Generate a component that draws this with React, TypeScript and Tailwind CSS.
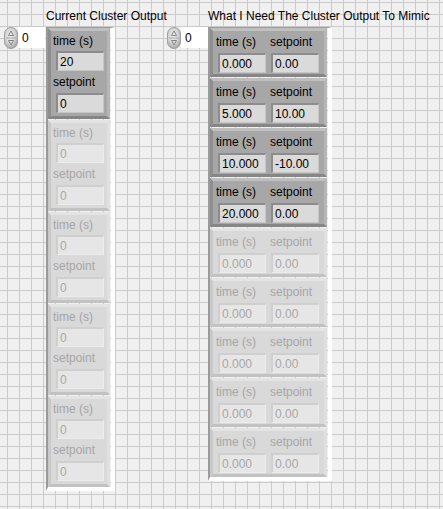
type Row = { time: string; setpoint: string };

const font = "font-['Liberation_Sans',Arial,sans-serif] text-[12px] leading-[14px]";

const leftRows = ["20", "0", "0", "0", "0"];
const rightRows: Row[] = [
  { time: "0.000", setpoint: "0.00" },
  { time: "5.000", setpoint: "10.00" },
  { time: "10.000", setpoint: "-10.00" },
  { time: "20.000", setpoint: "0.00" },
];
const rightEmpty = 5;

// little up/down incrementer drawn next to the index box
const Spinner = () => (
  <svg width="14" height="22" viewBox="0 0 14 22" className="shrink-0">
    <defs>
      <radialGradient id="spin" cx="45%" cy="40%" r="65%">
        <stop offset="0%" stopColor="#f2f2f2" />
        <stop offset="60%" stopColor="#d2d2d2" />
        <stop offset="100%" stopColor="#9c9c9c" />
      </radialGradient>
    </defs>
    <rect x="0.5" y="0.5" width="13" height="21" rx="6.5" fill="url(#spin)" stroke="#a0a0a0" />
    <line x1="2" y1="11" x2="12" y2="11" stroke="#a8a8a8" />
    <path d="M7 4 L4.5 8.5 L9.5 8.5 Z" fill="none" stroke="#7a7a7a" strokeWidth="0.9" />
    <path d="M7 18 L4.5 13.5 L9.5 13.5 Z" fill="none" stroke="#7a7a7a" strokeWidth="0.9" />
  </svg>
);

const IndexBox = () => (
  <div className="flex items-start">
    <Spinner />
    <div className={`${font} h-[21px] w-[27px] bg-white pl-[4px] pt-[4px] text-black`}>0</div>
  </div>
);

const ValueBox = ({ value, off }: { value: string; off?: boolean }) => (
  <div
    className={`${font} h-[20px] w-[48px] border-l-2 border-t-2 border-r border-b pl-[2px] pt-[2px] ${
      off
        ? "border-l-[#cfcfcf] border-t-[#cfcfcf] border-r-[#ececec] border-b-[#ececec] bg-[#e6e6e6] text-[#a6a6a6]"
        : "border-l-[#8c8c8c] border-t-[#8c8c8c] border-r-[#c6c6c6] border-b-[#c6c6c6] bg-[#dadada] text-black"
    }`}
  >
    {value}
  </div>
);

const clusterFrame = (off: boolean) =>
  off
    ? "border-[3px] border-t-[#e4e4e4] border-l-[#c9c9c9] border-r-[#e0e0e0] border-b-[#c2c2c2] bg-[#d9d9d9]"
    : "border-[3px] border-t-[#c0c0c0] border-l-[#8e8e8e] border-r-[#b6b6b6] border-b-[#868686] bg-[#a7a7a7]";

// one element of the left array: labels stacked above their values
const StackedCluster = ({ time, off }: { time: string; off: boolean }) => (
  <div className={`h-[91px] w-[62px] ${clusterFrame(off)} px-[2px] pt-[3px]`}>
    <div className={`${font} ${off ? "text-[#a6a6a6]" : "text-black"}`}>time (s)</div>
    <div className="ml-[3px] mt-[3px]">
      <ValueBox value={time} off={off} />
    </div>
    <div className={`${font} mt-[4px] ${off ? "text-[#a6a6a6]" : "text-black"}`}>setpoint</div>
    <div className="ml-[3px] mt-[4px]">
      <ValueBox value="0" off={off} />
    </div>
  </div>
);

// one element of the right array: two columns side by side
const WideCluster = ({ row, off }: { row: Row; off: boolean }) => (
  <div className={`flex h-[49px] w-[117px] ${clusterFrame(off)} pl-[3px] pt-[4px]`}>
    <div className="w-[54px]">
      <div className={`${font} ${off ? "text-[#a6a6a6]" : "text-black"}`}>time (s)</div>
      <div className="ml-[2px] mt-[4px]">
        <ValueBox value={row.time} off={off} />
      </div>
    </div>
    <div>
      <div className={`${font} ${off ? "text-[#a6a6a6]" : "text-black"}`}>setpoint</div>
      <div className="ml-[1px] mt-[4px]">
        <ValueBox value={row.setpoint} off={off} />
      </div>
    </div>
  </div>
);

const ArrayFrame = ({ children }: { children: React.ReactNode }) => (
  <div className="flex flex-col gap-px border-l-2 border-t border-r-4 border-b-4 border-l-[#9a9a9a] border-t-[#9a9a9a] border-r-white border-b-white pr-px">
    {children}
  </div>
);

export default function App() {
  return (
    <div className="h-[509px] w-[443px] overflow-hidden bg-[#f0f0f0] bg-[linear-gradient(to_right,#cbcbcb_1px,transparent_1px),linear-gradient(to_bottom,#cbcbcb_1px,transparent_1px)] bg-[size:12px_12px] bg-[position:7px_2px]">
      <div className="flex pl-[4px] pt-[9px]">
        <div className="flex w-[163px] shrink-0 flex-col">
          <div className={`${font} ml-[42px] whitespace-nowrap text-black`}>Current Cluster Output</div>
          <div className="mt-[4px] flex items-start">
            <IndexBox />
            <div className="ml-px">
              <ArrayFrame>
                {leftRows.map((t, i) => (
                  <StackedCluster key={i} time={t} off={i > 0} />
                ))}
              </ArrayFrame>
            </div>
          </div>
        </div>
        <div className="flex flex-col">
          <div className={`${font} ml-[41px] whitespace-nowrap text-black`}>
            What I Need The Cluster Output To Mimic
          </div>
          <div className="mt-[4px] flex items-start">
            <IndexBox />
            <ArrayFrame>
              {rightRows.map((r, i) => (
                <WideCluster key={i} row={r} off={false} />
              ))}
              {Array.from({ length: rightEmpty }).map((_, i) => (
                <WideCluster key={`e${i}`} row={{ time: "0.000", setpoint: "0.00" }} off />
              ))}
            </ArrayFrame>
          </div>
        </div>
      </div>
    </div>
  );
}
